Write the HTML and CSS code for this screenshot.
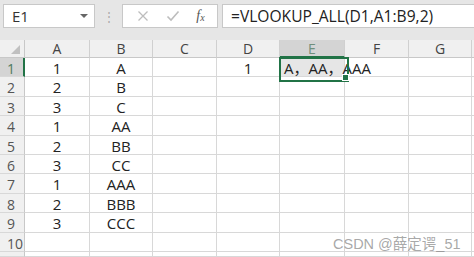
FILE: index.html
```html
<!DOCTYPE html>
<html lang="zh-CN">

<head>
    <meta charset="UTF-8">
    <meta name="viewport" content="width=device-width, initial-scale=1.0">
    <title>VLOOKUP_ALL</title>
    <link rel="stylesheet" href="styles.css">
</head>

<body>
    <div class="excel">
        <div class="bar">
            <div class="namebox">
                <span>E1</span>
                <i class="arrow"></i>
            </div>
            <div class="dots">⋮</div>
            <div class="btns">
                <svg class="ico" width="12" height="12" viewBox="0 0 12 12">
                    <path d="M1.5 1.5 L10.5 10.5 M10.5 1.5 L1.5 10.5" stroke="#bdbdbd" stroke-width="1.3" fill="none" />
                </svg>
                <svg class="ico" width="14" height="12" viewBox="0 0 14 12">
                    <path d="M1.5 6.5 L5 10 L12.5 1.5" stroke="#bdbdbd" stroke-width="1.6" fill="none" />
                </svg>
                <span class="fx">f<sub>x</sub></span>
            </div>
            <div class="formula">=VLOOKUP_ALL(D1,A1:B9,2)</div>
        </div>

        <div class="sheet">
            <div class="hd corner"><i></i></div>
            <div class="hd col">A</div>
            <div class="hd col">B</div>
            <div class="hd col">C</div>
            <div class="hd col">D</div>
            <div class="hd col on">E</div>
            <div class="hd col">F</div>
            <div class="hd col">G</div>
            <div class="hd col"></div>
        </div>
    </div>
    <div class="mark">CSDN @薛定谔_51</div>

    <script>
        var rows = [
            ["1", "A", "", "1", "A，AA，AAA"],
            ["2", "B"], ["3", "C"], ["1", "AA"], ["2", "BB"], ["3", "CC"],
            ["1", "AAA"], ["2", "BBB"], ["3", "CCC"], [], []
        ]
        var sheet = document.querySelector(".sheet")
        for (let r = 0; r < rows.length; r++) {
            var num = document.createElement("div")
            num.className = "hd row" + (r == 0 ? " on" : "")
            // 第11行只露出一点，不显示行号
            num.textContent = r < 10 ? r + 1 : ""
            sheet.appendChild(num)
            for (let c = 0; c < 8; c++) {
                var cell = document.createElement("div")
                cell.className = "cell"
                var v = rows[r][c] || ""
                cell.textContent = v
                if (c == 4) cell.classList.add("left")
                if (r == 0 && c == 4) cell.classList.add("sel")
                sheet.appendChild(cell)
            }
        }
    </script>
</body>

</html>
```

FILE: styles.css
```css
* {
    margin: 0;
    padding: 0;
    box-sizing: border-box;
}

body {
    width: 474px;
    height: 257px;
    overflow: hidden;
    position: relative;
    background-color: #fff;
    font-family: "Open Sans", "Noto Sans CJK SC", sans-serif;
}

.bar {
    display: flex;
    align-items: center;
    height: 40px;
    padding: 0 0 8px 3px;
    background-color: #e6e6e6;
}

.namebox {
    display: flex;
    align-items: center;
    justify-content: space-between;
    width: 92px;
    height: 24px;
    padding: 0 6px 0 8px;
    background-color: #fff;
    border: 1px solid #c8c8c8;
    font-size: 15px;
    color: #333;
}

.namebox .arrow {
    width: 0;
    height: 0;
    border-left: 4px solid transparent;
    border-right: 4px solid transparent;
    border-top: 4px solid #666;
}

.dots {
    width: 27px;
    text-align: center;
    font-size: 12px;
    color: #aaa;
}

.btns {
    display: flex;
    align-items: center;
    justify-content: space-around;
    width: 96px;
    height: 24px;
    padding: 0 4px 0 6px;
    background-color: #fff;
    border: 1px solid #c8c8c8;
}

.fx {
    font-family: "Liberation Serif", serif;
    font-style: italic;
    font-size: 14px;
    color: #555;
}

.fx sub {
    font-size: 10px;
    vertical-align: -1px;
}

.formula {
    flex: 1;
    height: 24px;
    margin-left: 4px;
    padding-left: 8px;
    line-height: 22px;
    background-color: #fff;
    border: 1px solid #c8c8c8;
    border-right: none;
    font-size: 15.6px;
    color: #222;
    white-space: nowrap;
}

.sheet {
    display: grid;
    grid-template-columns: 25px 65px 63px 64px 63px 65px 64px 63px 20px;
    grid-template-rows: 18px 19px 20px 19px 20px 19px 19px 20px 19px 20px 19px 5px;
    margin-top: -8px;
    padding-top: 8px;
    background-color: #e6e6e6;
}

.hd {
    background-color: #f0f0f0;
    color: #444;
    font-size: 14px;
    text-align: center;
}

.corner {
    position: relative;
    border-right: 1px solid #c8c8c8;
    border-bottom: 1px solid #c8c8c8;
}

.corner i {
    position: absolute;
    right: 4px;
    bottom: 3px;
    width: 0;
    height: 0;
    border-left: 9px solid transparent;
    border-bottom: 9px solid #c0c0c0;
}

.col {
    line-height: 18px;
    border-right: 1px solid #d0d0d0;
    border-bottom: 1px solid #c8c8c8;
}

.col.on {
    background-color: #d4d4d4;
    color: #6f8f7c;
    border-bottom: 2px solid #217346;
}

.row {
    text-align: left;
    padding-left: 7px;
    line-height: 22px;
    font-size: 14px;
    color: #555;
    border-right: 1px solid #c8c8c8;
    border-bottom: 1px solid #d8d8d8;
}

.row.on {
    background-color: #d4d4d4;
    color: #4d7a60;
    border-right: 2px solid #217346;
}

.cell {
    overflow: visible;
    background-color: #fff;
    border-right: 1px solid #d8d8d8;
    border-bottom: 1px solid #d8d8d8;
    text-align: center;
    font-size: 15px;
    line-height: 20px;
    color: #222;
    white-space: nowrap;
}

.cell.left {
    text-align: left;
    padding-left: 4px;
}

.cell.sel {
    position: relative;
    z-index: 1;
    background-color: transparent;
}

.cell.sel::after {
    content: "";
    position: absolute;
    left: -1px;
    top: -1px;
    width: 66px;
    height: 21px;
    border: 2px solid #217346;
}

.cell.sel::before {
    content: "";
    position: absolute;
    left: 62px;
    top: 16px;
    width: 5px;
    height: 5px;
    background-color: #217346;
    border: 1px solid #fff;
    z-index: 2;
}

.mark {
    position: absolute;
    left: 333px;
    top: 232px;
    font-family: "Liberation Sans", "Noto Sans CJK SC", sans-serif;
    font-size: 14.5px;
    color: rgba(130, 130, 130, .7);
    white-space: nowrap;
}
```
